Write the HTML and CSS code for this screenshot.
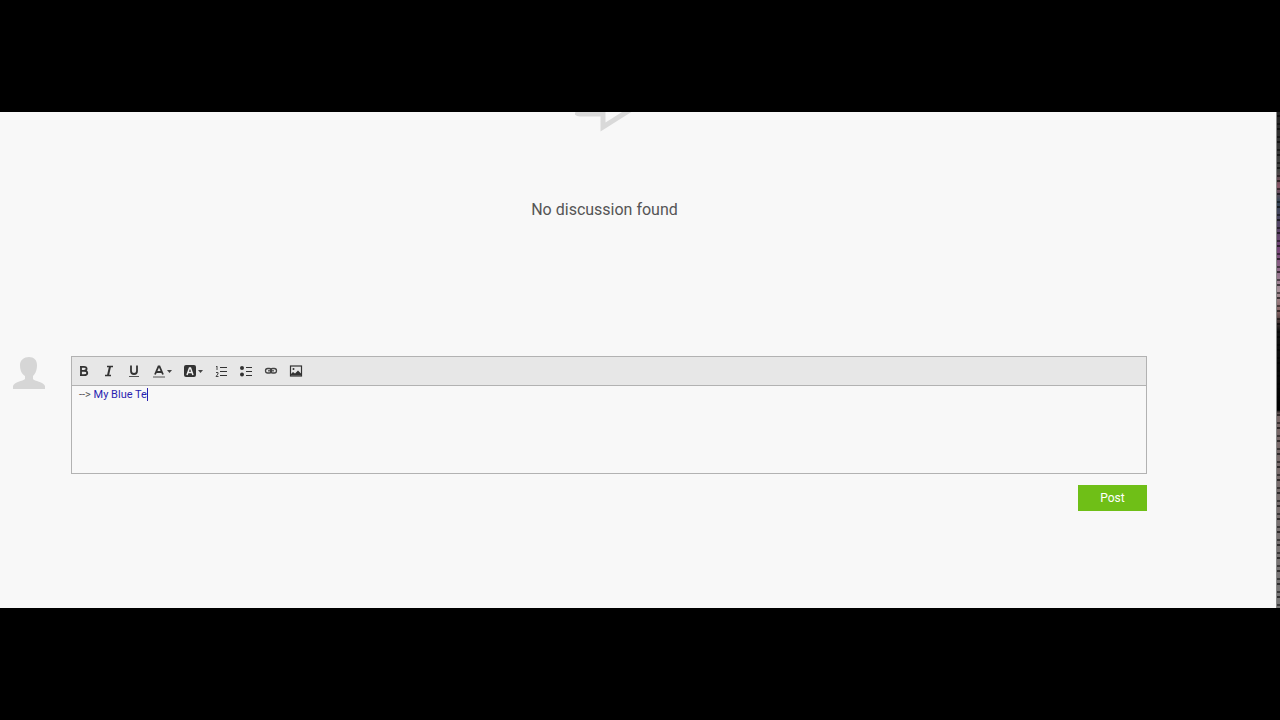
FILE: index.html
```html
<!DOCTYPE html>
<html lang="en">
<head>
  <meta charset="UTF-8" />
  <meta name="viewport" content="width=device-width, initial-scale=1.0" />
  <title>Discussion</title>
  <link rel="stylesheet" href="styles.css">
</head>
<body>

<div class="stage">
  <main>
    <section class="empty">
      <svg class="bubble" viewBox="0 0 60 20" aria-hidden="true">
        <path d="M1 0Q2 2 5 2H28V15L58 -4" fill="none" stroke="#d9d9d9" stroke-width="5" />
      </svg>
      <p>No discussion found</p>
    </section>

    <form class="composer">
      <svg class="avatar" viewBox="0 0 33 33" aria-hidden="true">
        <path d="M17 1c5 0 8 3 8 8 0 6-2 9-4 11v3c1 2 11 3 12 7v3H1v-3c1-4 10-5 12-7v-3c-3-2-5-5-5-11 0-5 4-8 9-8z" fill="#d6d6d6" />
      </svg>
      <div class="reply">
        <div class="editor">
          <div class="toolbar" role="toolbar" aria-label="Formatting">
            <button type="button" aria-label="Bold">
              <svg viewBox="0 0 14 14"><path d="M4 2.500v9M3 2.800h4q2.600 0 2.600 2t-2.600 2H4M7 6.800q3.300 0 3.300 2.200t-3.300 2.200H3" fill="none" stroke="#333" stroke-width="1.800" /></svg>
            </button>
            <button type="button" aria-label="Italic">
              <svg viewBox="0 0 14 14"><path d="M5 2.500h6M3 11.500h6" stroke="#333" stroke-width="1.300" /><path d="M8 2.500L6 11.500" stroke="#333" stroke-width="2" /></svg>
            </button>
            <button type="button" aria-label="Underline">
              <svg viewBox="0 0 14 14"><path d="M4 1.500v5.500q0 3 3 3t3-3V1.500" fill="none" stroke="#333" stroke-width="1.800" /><path d="M2 12.500h10" stroke="#555" /></svg>
            </button>
            <button type="button" class="wide" aria-label="Text color">
              <svg viewBox="0 0 14 14"><path d="M3 10.500L6.500 2.500h1L11 10.500M4.500 8h5" fill="none" stroke="#333" stroke-width="1.800" /><path d="M1 13h12" stroke="#555" /></svg>
              <svg class="arrow" viewBox="0 0 5 3"><path d="M0 0h5L2.500 3z" fill="#444" /></svg>
            </button>
            <button type="button" class="wide" aria-label="Background color">
              <svg viewBox="0 0 14 14"><rect x="1" y="1" width="12" height="12" rx="2" fill="#333" /><path d="M4 11L6.500 4h1L10 11M5 8.500h4" fill="none" stroke="#eee" stroke-width="1.500" /></svg>
              <svg class="arrow" viewBox="0 0 5 3"><path d="M0 0h5L2.500 3z" fill="#444" /></svg>
            </button>
            <button type="button" aria-label="Numbered list">
              <svg viewBox="0 0 14 14"><path d="M6 3.500h7M6 7.500h7M6 11.500h7" stroke="#333" stroke-width="1.200" /><path d="M2 3l1-1v4M2 8.500h2v1.500L2 12.500h2.500" fill="none" stroke="#444" /></svg>
            </button>
            <button type="button" aria-label="Bulleted list">
              <svg viewBox="0 0 14 14"><path d="M7 3.500h6M7 7.500h6M7 11.500h6" stroke="#333" stroke-width="1.200" /><circle cx="3" cy="4" r="2" fill="#333" /><circle cx="3" cy="10.500" r="2" fill="#333" /></svg>
            </button>
            <button type="button" aria-label="Link">
              <svg viewBox="0 0 14 14"><rect x="1.500" y="4.500" width="6" height="4.500" rx="2.200" fill="none" stroke="#444" stroke-width="1.300" /><rect x="6.500" y="4.500" width="6" height="4.500" rx="2.200" fill="none" stroke="#444" stroke-width="1.300" /><path d="M4 6.800h6" stroke="#444" stroke-width="1.200" /></svg>
            </button>
            <button type="button" aria-label="Image">
              <svg viewBox="0 0 14 14"><rect x="1.500" y="2" width="11" height="10" fill="none" stroke="#333" stroke-width="1.200" /><path d="M2 11.500V10l2-2 2 1.500L9 6.500l3 3v2z" fill="#333" /><circle cx="4.500" cy="5" r="1" fill="#333" /></svg>
            </button>
          </div>
          <div class="text" contenteditable="true" role="textbox" aria-multiline="true" aria-label="Message" spellcheck="false">--&gt; <span class="blue">My Blue Te</span></div>
        </div>
        <button type="submit" class="post">Post</button>
      </div>
    </form>
  </main>
  <div class="edge"></div>
</div>

</body>
</html>
```
FILE: styles.css
```css
* {
  box-sizing: border-box;
}
body {
  margin: 0;
  min-height: 100vh;
  display: flex;
  padding: 112px 0;
  background: #000;
  font-family: Roboto, sans-serif;
}
.stage {
  flex: 1;
  display: flex;
  background: #f8f8f8;
}
main {
  flex: 1;
  padding: 0 129px 0 12px;
}
.empty {
  display: flex;
  flex-direction: column;
  align-items: center;
  margin-left: 50px;
  color: #555;
}
.bubble {
  width: 60px;
  height: 20px;
}
.empty p {
  margin: 66px 0 134px;
  font-size: 16px;
  line-height: 24px;
}
.composer {
  display: flex;
  gap: 26px;
}
.avatar {
  width: 33px;
  height: 33px;
}
.reply {
  flex: 1;
}
.editor {
  border: 1px solid #b2b2b2;
}
.toolbar {
  display: flex;
  gap: 1px;
  height: 29px;
  background: #e7e7e7;
  border-bottom: 1px solid #b2b2b2;
}
.toolbar button {
  display: flex;
  align-items: center;
  justify-content: center;
  width: 24px;
  padding: 0;
  border: 0;
  background: none;
}
.toolbar .wide {
  width: 30px;
  gap: 1px;
}
.toolbar svg {
  width: 14px;
  height: 14px;
}
.toolbar .arrow {
  width: 5px;
  height: 3px;
}
.text {
  min-height: 87px;
  padding: 1px 7px;
  font-size: 11px;
  line-height: 16px;
  color: #555;
  outline: none;
}
.blue {
  color: #2a1fb0;
  border-right: 1px solid #2a1fb0;
}
.post {
  display: block;
  width: 69px;
  height: 26px;
  margin: 11px 0 0 auto;
  padding: 0;
  border: 0;
  background: #6fbf17;
  color: #fff;
  font-family: inherit;
  font-size: 12px;
}
/* strip of the neighbouring screen along the right side */
.edge {
  width: 4px;
  border-left: 1px solid #888;
  background:
    repeating-linear-gradient(transparent 0 3px, rgba(0, 0, 0, 0.6) 3px 5px, transparent 5px 11px, rgba(0, 0, 0, 0.5) 11px 13px),
    linear-gradient(#222 0, #444 12%, #856 15%, #345 18%, #747 28%, #a8929a 36%, #866 40%, #111 44%, #000 60%, #766 61%, #777 100%);
}
```
